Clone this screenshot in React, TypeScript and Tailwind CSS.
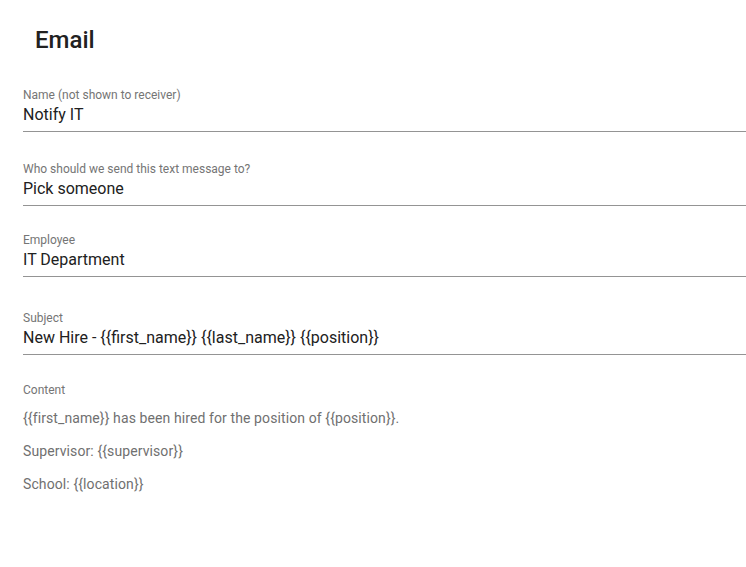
import * as React from "react";

type Field = { label: string; value: string; gap: string };

const fields: Field[] = [
  { label: "Name (not shown to receiver)", value: "Notify IT", gap: "mt-[31px]" },
  { label: "Who should we send this text message to?", value: "Pick someone", gap: "mt-[29px]" },
  { label: "Employee", value: "IT Department", gap: "mt-[26px]" },
  { label: "Subject", value: "New Hire - {{first_name}} {{last_name}} {{position}}", gap: "mt-[33px]" },
];

const content = [
  "{{first_name}} has been hired for the position of {{position}}.",
  "Supervisor: {{supervisor}}",
  "School: {{location}}",
];

export default function App() {
  return (
    <div className="min-h-[567px] w-full bg-white pl-[23px] pt-6 font-['Roboto',sans-serif]">
      <h1 className="pl-3 text-2xl leading-8 font-medium text-[#212121]">Email</h1>

      {fields.map((f) => (
        <div key={f.label} className={`${f.gap} border-b border-[#949494] pb-1`}>
          <div className="text-xs leading-4 text-[#757575]">{f.label}</div>
          <div className="text-base leading-6 text-[#212121]">{f.value}</div>
        </div>
      ))}

      <div className="mt-[27px]">
        <div className="text-xs leading-4 text-[#757575]">Content</div>
        <div className="mt-[10px] flex flex-col gap-[13px] text-sm leading-5 tracking-[0.1px] text-[#707070]">
          {content.map((line) => (
            <p key={line}>{line}</p>
          ))}
        </div>
      </div>
    </div>
  );
}
